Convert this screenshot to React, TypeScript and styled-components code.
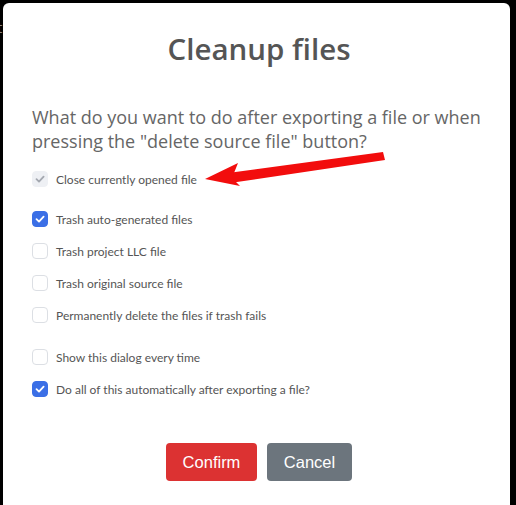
import React from "react";
import styled, { createGlobalStyle } from "styled-components";

const Global = createGlobalStyle`
  html, body { margin: 0; padding: 0; background: #000; overflow: hidden; }
  body { width: 516px; height: 505px; position: relative; }
`;

const Backdrop = styled.div`
  position: relative;
  width: 516px;
  height: 505px;
  padding: 3px 6px 0 3px;
  box-sizing: border-box;
`;

const EdgeGlyph = styled.span`
  position: absolute;
  left: -3px;
  top: 17px;
  font-family: "Open Sans", sans-serif;
  font-size: 15px;
  color: #888;
`;

const Dialog = styled.div`
  background: #fff;
  border-radius: 6px 6px 0 0;
  height: 510px;
  padding: 0 29px;
  box-sizing: border-box;
  display: flex;
  flex-direction: column;
`;

const Title = styled.h1`
  margin: 26px 0 0;
  padding-left: 5px;
  text-align: center;
  font-family: "Open Sans", sans-serif;
  font-weight: 600;
  font-size: 29.5px;
  line-height: 40px;
  color: #555;
`;

const Question = styled.p`
  margin: 36px 0 0;
  font-family: "Open Sans", sans-serif;
  font-size: 18px;
  line-height: 24px;
  color: #666;
`;

const Group = styled.div<{ $gap: number }>`
  display: flex;
  flex-direction: column;
  gap: 16px;
  margin-top: ${(p) => p.$gap}px;
`;

const Row = styled.label`
  display: flex;
  align-items: center;
  gap: 8px;
  height: 16px;
  font-family: Lato, "Noto Sans", sans-serif;
  font-size: 12px;
  color: #555;
`;

const Box = styled.span<{ $checked?: boolean; $disabled?: boolean }>`
  width: 16px;
  height: 16px;
  box-sizing: border-box;
  border-radius: 4px;
  flex: none;
  display: flex;
  align-items: center;
  justify-content: center;
  background: ${(p) => (p.$disabled ? "#eef0f4" : p.$checked ? "#3b6fe6" : "#fff")};
  border: 1px solid
    ${(p) => (p.$disabled ? "#eef0f4" : p.$checked ? "#3b6fe6" : "#dcdfe4")};
`;

const Actions = styled.div`
  display: flex;
  justify-content: center;
  gap: 10px;
  margin-top: 46px;
  padding-left: 5px;
`;

const Button = styled.button<{ $variant: "danger" | "secondary" }>`
  height: 38px;
  padding: 0;
  border: none;
  border-radius: 4px;
  font-family: "Liberation Sans", Arial, sans-serif;
  font-size: 16.5px;
  color: #fff;
  background: ${(p) => (p.$variant === "danger" ? "#dc3232" : "#6c757d")};
  width: ${(p) => (p.$variant === "danger" ? "91px" : "85px")};
`;

const Arrow = styled.svg`
  position: absolute;
  left: 0;
  top: 0;
  pointer-events: none;
`;

const Check = ({ color }: { color: string }) => (
  <svg width="12" height="12" viewBox="0 0 12 12">
    <path
      d="M2.5 6.2 L5 8.6 L9.6 3.6"
      fill="none"
      stroke={color}
      strokeWidth="1.8"
      strokeLinecap="round"
      strokeLinejoin="round"
    />
  </svg>
);

type Item = { label: string; checked?: boolean; disabled?: boolean };

const CheckRow = ({ label, checked, disabled }: Item) => (
  <Row>
    <Box $checked={checked} $disabled={disabled}>
      {(checked || disabled) && <Check color={disabled ? "#a4a8b0" : "#fff"} />}
    </Box>
    {label}
  </Row>
);

export default function App() {
  return (
    <>
      <Global />
      <Backdrop>
        <EdgeGlyph>t</EdgeGlyph>
        <Dialog>
          <Title>Cleanup files</Title>
          <Question>
            What do you want to do after exporting a file or when pressing the "delete source
            file" button?
          </Question>
          <Group $gap={18}>
            <CheckRow label="Close currently opened file" disabled checked />
          </Group>
          <Group $gap={24}>
            <CheckRow label="Trash auto-generated files" checked />
            <CheckRow label="Trash project LLC file" />
            <CheckRow label="Trash original source file" />
            <CheckRow label="Permanently delete the files if trash fails" />
          </Group>
          <Group $gap={26}>
            <CheckRow label="Show this dialog every time" />
            <CheckRow label="Do all of this automatically after exporting a file?" checked />
          </Group>
          <Actions>
            <Button $variant="danger">Confirm</Button>
            <Button $variant="secondary">Cancel</Button>
          </Actions>
        </Dialog>
        <Arrow width="516" height="505" viewBox="0 0 516 505">
          <polygon points="228,173 383,152 385,160 230,183" fill="#f20d0d" />
          <polygon points="205,179 238,163 232,178 240,186" fill="#f20d0d" />
        </Arrow>
      </Backdrop>
    </>
  );
}
